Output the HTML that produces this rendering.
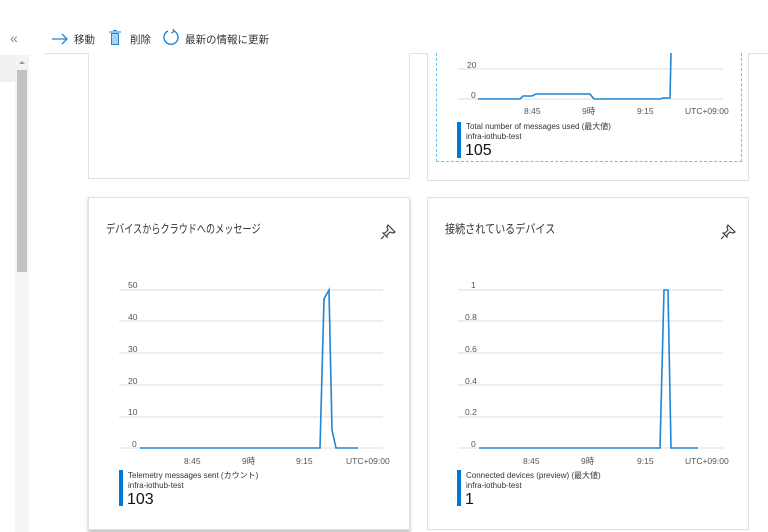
<!DOCTYPE html>
<html><head><meta charset="utf-8"><style>
body{margin:0;width:768px;height:532px;overflow:hidden;background:#fff;font-family:"Liberation Sans","Noto Sans CJK JP",sans-serif;position:relative;color:#333}
.abs{position:absolute}
.card{position:absolute;background:#fff;border:1px solid #e1e1e1;box-sizing:border-box}
.tb{font-size:10.5px;color:#333;top:32px}
.ttl{font-size:12px;transform-origin:0 0;white-space:nowrap;color:#333}
</style></head><body>
<div class="abs" style="left:10px;top:30px;font-size:14px;color:#888">«</div>
<div class="abs" style="left:0;top:55px;width:15px;height:27px;background:#f0f0f0"></div>
<div class="abs" style="left:15px;top:55px;width:14px;height:477px;background:#f4f4f4"></div>
<div class="abs" style="left:17px;top:70px;width:10px;height:202px;background:#c2c2c2"></div>
<div class="abs" style="left:19px;top:61px;width:0;height:0;border-left:3px solid transparent;border-right:3px solid transparent;border-bottom:3px solid #999"></div>
<div class="abs" style="left:45px;top:53px;width:723px;height:1px;background:#e1e1e1"></div>
<svg class="abs" style="left:50px;top:31px" width="20" height="16"><path d="M2 8H17M12 3L17 8L12 13" stroke="#1f85d6" stroke-width="1.3" fill="none"/></svg>
<div class="abs tb" style="left:74px">移動</div>
<svg class="abs" style="left:108px;top:29px" width="14" height="18"><rect x="3.5" y="4.5" width="7" height="11" fill="#a8d1f2" stroke="#1f85d6"/><path d="M1 3H13M5 1.5H9" stroke="#1f85d6"/></svg>
<div class="abs tb" style="left:130px">削除</div>
<svg class="abs" style="left:162px;top:28px" width="18" height="18"><path d="M6 3A7 7 0 1 0 12 3M11 1L12 3.5L9.5 5" stroke="#1f85d6" stroke-width="1.4" fill="none"/></svg>
<div class="abs tb" style="left:185px">最新の情報に更新</div>

<div class="card" style="left:88px;top:53px;width:322px;height:126px;border-top:none"></div>
<div class="card" style="left:427px;top:53px;width:322px;height:128px;border-top:none"></div>
<div class="abs" style="left:436px;top:53px;width:304px;height:108px;border:1px dashed #5bc8f0;border-top:none"></div>
<svg class="abs" style="left:427px;top:53px" width="322" height="70" font-size="8.5" fill="#555" font-family="Liberation Sans,sans-serif">
<line x1="31" y1="16" x2="296" y2="16" stroke="#ddd"/>
<line x1="31" y1="46" x2="296" y2="46" stroke="#ddd"/>
<text x="40" y="15">20</text><text x="44" y="45">0</text>
<path d="M51 46H93L96 43H105L109 41H163L167 46H233L236 45H243L244 0" stroke="#1f85d6" stroke-width="1.6" fill="none"/>
<text x="97" y="61">8:45</text><text x="155" y="61">9時</text><text x="210" y="61">9:15</text><text x="258" y="61">UTC+09:00</text>
</svg>
<div class="abs" style="left:457px;top:122px;width:4px;height:36px;background:#0078d4"></div>
<div class="abs" style="left:466px;top:122px;font-size:8px;line-height:10px">Total number of messages used (最大値)<br>infra-iothub-test</div>
<div class="abs" style="left:465px;top:142px;font-size:16px;color:#111">105</div>

<div class="card" style="left:88px;top:197px;width:322px;height:333px;box-shadow:0 2px 3px #bbb"></div>
<div class="abs ttl" style="left:106px;top:220px;transform:scaleX(0.76)">デバイスからクラウドへのメッセージ</div>
<svg class="abs" style="left:380px;top:224px" width="16" height="16"><path d="M8 1L15 8L13 9L10 8L7 11L7 13L3 9L5 9L8 6L7 3Z M4 12L1 15" stroke="#333" fill="none" stroke-width="1.1"/></svg>
<svg class="abs" style="left:88px;top:270px" width="322" height="200" font-size="8.5" fill="#555" font-family="Liberation Sans,sans-serif">
<g stroke="#ddd"><line x1="31" y1="20" x2="295" y2="20"/><line x1="31" y1="51" x2="295" y2="51"/><line x1="31" y1="83" x2="295" y2="83"/><line x1="31" y1="115" x2="295" y2="115"/><line x1="31" y1="147" x2="295" y2="147"/><line x1="31" y1="178" x2="295" y2="178"/></g>
<text x="40" y="18">50</text><text x="40" y="50">40</text><text x="40" y="82">30</text><text x="40" y="114">20</text><text x="40" y="145">10</text><text x="44" y="177">0</text>
<path d="M52 178H232L236 29L241 20L244 160L248 178H270" stroke="#1f85d6" stroke-width="1.6" fill="none"/>
<text x="96" y="194">8:45</text><text x="154" y="194">9時</text><text x="208" y="194">9:15</text><text x="258" y="194">UTC+09:00</text>
</svg>
<div class="abs" style="left:119px;top:470px;width:4px;height:36px;background:#0078d4"></div>
<div class="abs" style="left:128px;top:471px;font-size:8px;line-height:10px">Telemetry messages sent (カウント)<br>infra-iothub-test</div>
<div class="abs" style="left:127px;top:491px;font-size:16px;color:#111">103</div>

<div class="card" style="left:427px;top:197px;width:322px;height:333px"></div>
<div class="abs ttl" style="left:445px;top:220px;transform:scaleX(0.84)">接続されているデバイス</div>
<svg class="abs" style="left:720px;top:224px" width="16" height="16"><path d="M8 1L15 8L13 9L10 8L7 11L7 13L3 9L5 9L8 6L7 3Z M4 12L1 15" stroke="#333" fill="none" stroke-width="1.1"/></svg>
<svg class="abs" style="left:427px;top:270px" width="322" height="200" font-size="8.5" fill="#555" font-family="Liberation Sans,sans-serif">
<g stroke="#ddd"><line x1="31" y1="20" x2="296" y2="20"/><line x1="31" y1="51" x2="296" y2="51"/><line x1="31" y1="83" x2="296" y2="83"/><line x1="31" y1="115" x2="296" y2="115"/><line x1="31" y1="147" x2="296" y2="147"/><line x1="31" y1="178" x2="296" y2="178"/></g>
<text x="44" y="18">1</text><text x="38" y="50">0.8</text><text x="38" y="82">0.6</text><text x="38" y="114">0.4</text><text x="38" y="145">0.2</text><text x="44" y="177">0</text>
<path d="M52 178H233L237 20H241L244 178H271" stroke="#1f85d6" stroke-width="1.6" fill="none"/>
<text x="96" y="194">8:45</text><text x="154" y="194">9時</text><text x="210" y="194">9:15</text><text x="258" y="194">UTC+09:00</text>
</svg>
<div class="abs" style="left:457px;top:470px;width:4px;height:36px;background:#0078d4"></div>
<div class="abs" style="left:466px;top:471px;font-size:8px;line-height:10px">Connected devices (preview) (最大値)<br>infra-iothub-test</div>
<div class="abs" style="left:465px;top:491px;font-size:16px;color:#111">1</div>
</body></html>
